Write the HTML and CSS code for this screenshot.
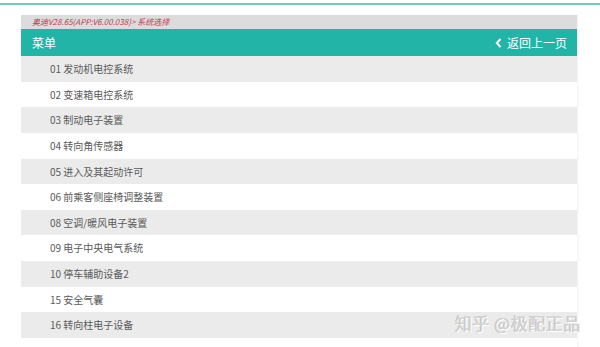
FILE: index.html
```html
<!DOCTYPE html>
<html lang="zh-CN">
<head>
<meta charset="utf-8">
<title>系统选择</title>
<link rel="stylesheet" href="styles.css">
</head>
<body>
<div class="topline"></div>
<div class="panel">
  <div class="crumb">奥迪V28.65(APP:V6.00.038)&gt; 系统选择</div>
  <div class="header">
    <span class="title">菜单</span>
    <span class="back"><svg class="chev" width="7" height="10" viewBox="0 0 7 10"><polyline points="5.5,1 1.8,5 5.5,9" fill="none" stroke="#fff" stroke-width="2"/></svg>返回上一页</span>
  </div>
  <ul class="list">
    <li class="row">01 发动机电控系统</li>
    <li class="row">02 变速箱电控系统</li>
    <li class="row">03 制动电子装置</li>
    <li class="row">04 转向角传感器</li>
    <li class="row">05 进入及其起动许可</li>
    <li class="row">06 前乘客侧座椅调整装置</li>
    <li class="row">08 空调/暖风电子装置</li>
    <li class="row">09 电子中央电气系统</li>
    <li class="row">10 停车辅助设备2</li>
    <li class="row">15 安全气囊</li>
    <li class="row">16 转向柱电子设备</li>
    <li class="row"></li>
  </ul>
</div>
<div class="watermark">知乎 @极配正品</div>
</body>
</html>
```
FILE: styles.css
```css
html, body {
  margin: 0;
  padding: 0;
  background: #ffffff;
  overflow: hidden;
}
body {
  width: 600px;
  height: 347px;
  position: relative;
  font-family: "Noto Sans CJK SC", "Noto Sans", sans-serif;
}
.topline {
  margin-top: 3px;
  height: 2px;
  background: #6ccbc2;
}
.panel {
  margin: 10px 0 0 21px;
  width: 556px;
  box-shadow: 1px 0 2px rgba(0,0,0,0.06);
}
.crumb {
  height: 14px;
  background: #dcdcdc;
  color: #c8374f;
  font-size: 8px;
  font-style: italic;
  line-height: 14px;
  padding-left: 11px;
  white-space: nowrap;
}
.header {
  height: 27px;
  background: #22b4a6;
  color: #ffffff;
  display: flex;
  align-items: center;
  justify-content: space-between;
  padding: 0 10px 0 11px;
  font-size: 12px;
}
.back {
  display: flex;
  align-items: center;
  gap: 5px;
}
.chev {
  display: block;
}
.list {
  list-style: none;
  margin: 0;
  padding: 0;
}
.row {
  height: 25.64px;
  line-height: 25.64px;
  padding-left: 29px;
  font-size: 10px;
  color: #5a5a5a;
  background: #ffffff;
  white-space: nowrap;
}
.row:nth-child(odd) {
  background: #ebebeb;
}
.row:last-child {
  background: #ffffff;
}
.watermark {
  position: absolute;
  left: 455px;
  top: 310px;
  font-size: 17px;
  color: #d4d4d4;
  letter-spacing: 0.5px;
  text-shadow: -0.5px -0.5px 0 #b8b8b8, 1px 1px 0 #ffffff;
  white-space: nowrap;
}
```
